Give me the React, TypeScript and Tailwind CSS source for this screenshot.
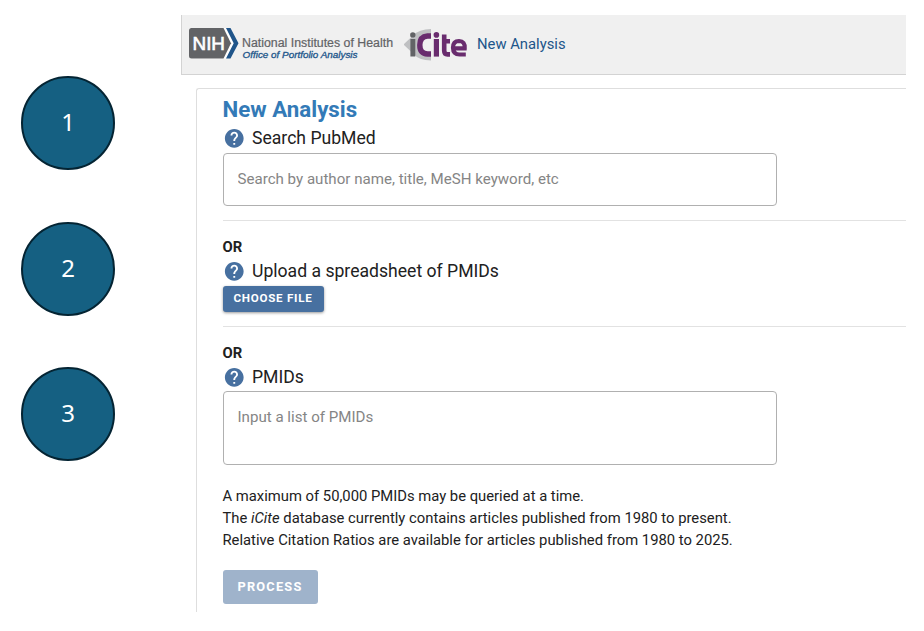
import type { ReactNode } from "react";
import { MdHelp } from "react-icons/md";

const steps = [1, 2, 3];

const NihLogo = () => (
  <svg width="206" height="34" viewBox="0 0 206 34" className="shrink-0">
    <path d="M2.5 1H38L46 16.2L38 31.5H2.5Q0 31.5 0 29V3.5Q0 1 2.5 1Z" fill="#ffffff" />
    <path d="M2.5 1H34.5L42 16.2L34.5 31.5H2.5Q0 31.5 0 29V3.5Q0 1 2.5 1Z" fill="#626366" />
    <path d="M37 1H41.5L49.5 16.2L41.5 31.5H37L44.7 16.2Z" fill="#20558a" />
    <text
      x="3.5"
      y="22.7"
      textLength="32.5"
      lengthAdjust="spacingAndGlyphs"
      fontFamily="Liberation Sans, sans-serif"
      fontSize="18"
      fill="#ffffff"
      stroke="#ffffff"
      strokeWidth="0.6"
    >
      NIH
    </text>
    <text
      x="53"
      y="20"
      textLength="151"
      lengthAdjust="spacingAndGlyphs"
      fontFamily="Liberation Sans, sans-serif"
      fontSize="12"
      fill="#626366"
      stroke="#626366"
      strokeWidth="0.2"
    >
      National Institutes of Health
    </text>
    <text
      x="53.5"
      y="31"
      textLength="115"
      lengthAdjust="spacingAndGlyphs"
      fontFamily="Liberation Sans, sans-serif"
      fontSize="9.3"
      fontStyle="italic"
      fill="#20558a"
      stroke="#20558a"
      strokeWidth="0.3"
    >
      Office of Portfolio Analysis
    </text>
  </svg>
);

const ICiteLogo = () => (
  <svg width="64" height="34" viewBox="0 0 64 34" className="shrink-0">
    <path
      d="M-0.5 17.5L9 8.5Q15 2 27 2V7Q18 8 16 17.5Q18 27 27 28.5V33.5Q15 33.5 9 26.5Z"
      fill="#bfc0c2"
    />
    <circle cx="8.8" cy="7.9" r="2.7" fill="#626366" />
    <path d="M6.4 12H11.3V29.5H6.4Z" fill="#626366" />
    <path
      d="M27 9H23.5Q15.8 9.6 15.8 18Q15.8 26.7 23.5 27H27"
      fill="none"
      stroke="#692c6e"
      strokeWidth="5.4"
    />
    <circle cx="32.4" cy="7.9" r="2.8" fill="#692c6e" />
    <path d="M29.8 12H35V29.6H29.8Z" fill="#692c6e" />
    <path
      d="M40.2 7.5V23.5Q40.2 27.4 43.5 27.4H46M38 14.2H46"
      fill="none"
      stroke="#692c6e"
      strokeWidth="4.6"
    />
    <path
      d="M49.5 21.3H60.7Q61.3 14.2 55 14Q49 14.1 49 20.7Q49 27.5 55.6 27.5H61.8"
      fill="none"
      stroke="#692c6e"
      strokeWidth="4.2"
    />
  </svg>
);

const FieldLabel = ({ children }: { children: ReactNode }) => (
  <div className="flex h-[22px] items-center whitespace-nowrap text-[17.6px] leading-[22px] text-[#212121]">
    <MdHelp className="mr-[7px] size-[22.5px] shrink-0 text-[#4770a0]" />
    {children}
  </div>
);

export default function App() {
  return (
    <div className="flex h-[631px] w-[924px] overflow-hidden bg-white font-[Roboto,sans-serif] text-[#212121]">
      {/* Step markers */}
      <div className="flex w-[181px] shrink-0 flex-col gap-[51.5px] pl-[21px] pt-[76px]">
        {steps.map((step) => (
          <div
            key={step}
            className="flex size-[94px] shrink-0 items-center justify-center rounded-full border-2 border-[#042433] bg-[#156082] pb-[2px] font-['Noto_Sans',sans-serif] text-[24px] leading-none text-white"
          >
            {step}
          </div>
        ))}
      </div>

      <div className="mt-[15px] flex h-[597px] w-[725px] flex-col">
        <header className="flex h-[60px] shrink-0 items-center border-b border-l border-[#d3d3d3] bg-[#f0f0f0] pb-[1px] pl-[7px]">
          <NihLogo />
          <div className="ml-[9px]">
            <ICiteLogo />
          </div>
          <a className="ml-[9px] whitespace-nowrap text-[14.8px] leading-5 text-[#20558a]">
            New Analysis
          </a>
        </header>

        <main className="ml-[15px] mt-[13px] flex-1 rounded-tl-[3px] border-l border-t border-[#dedede] pl-[25.5px] pt-[8px]">
          <h1 className="h-6 text-[22.3px] font-bold leading-6 text-[#337ab7]">
            New Analysis
          </h1>

          <section className="pt-[6px]">
            <FieldLabel>Search PubMed</FieldLabel>
            <input
              className="mt-[4px] block h-[53px] w-[554px] rounded-[4px] border border-[#b0b0b0] px-[14px] pb-[2px] text-[15.1px] placeholder:text-[#858585]"
              placeholder="Search by author name, title, MeSH keyword, etc"
            />
          </section>

          <section className="mt-[14px] border-t border-[#e2e2e2] pt-[15px]">
            <p className="text-[14.8px] font-bold leading-[22px]">OR</p>
            <div className="mt-[2px]">
              <FieldLabel>Upload a spreadsheet of PMIDs</FieldLabel>
            </div>
            <button className="mt-[4px] block h-[26px] w-[101px] whitespace-nowrap rounded-[3px] bg-[#4770a0] text-[11.6px] font-bold leading-none tracking-[0.75px] text-white shadow-[0_1px_3px_rgba(0,0,0,0.4)]">
              CHOOSE FILE
            </button>
          </section>

          <section className="mt-[14px] border-t border-[#e2e2e2] pt-[15px]">
            <p className="text-[14.8px] font-bold leading-[22px]">OR</p>
            <div className="mt-[2px]">
              <FieldLabel>PMIDs</FieldLabel>
            </div>
            <textarea
              className="mt-[3px] block h-[74px] w-[554px] resize-none rounded-[4px] border border-[#b0b0b0] px-[14px] py-[14px] text-[15.1px] leading-[22px] placeholder:text-[#858585]"
              placeholder="Input a list of PMIDs"
            />
            <div className="mt-[20px] whitespace-nowrap text-[14.8px] leading-[22px]">
              <p>A maximum of 50,000 PMIDs may be queried at a time.</p>
              <p>
                The <i>iCite</i> database currently contains articles published
                from 1980 to present.
              </p>
              <p>
                Relative Citation Ratios are available for articles published
                from 1980 to 2025.
              </p>
            </div>
            <button className="mt-[19px] block h-[34px] w-[95px] rounded-[3px] bg-[#9fb3cb] text-[12.8px] font-bold leading-none tracking-[1.2px] text-white">
              PROCESS
            </button>
          </section>
        </main>
      </div>
    </div>
  );
}
